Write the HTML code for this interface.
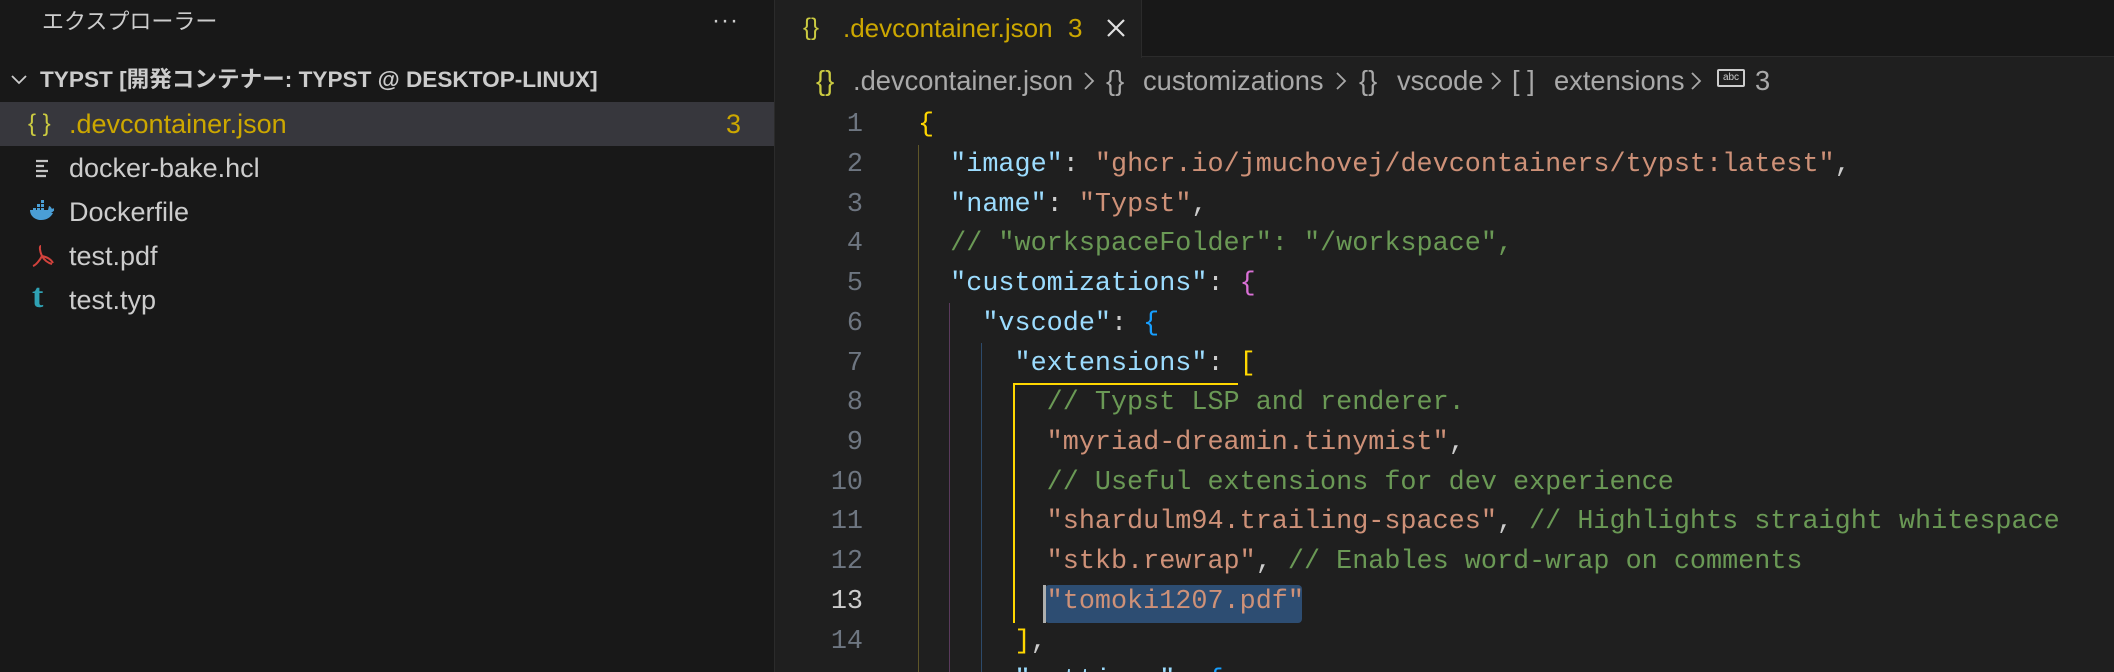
<!DOCTYPE html>
<html style="width:2114px;height:672px;overflow:hidden"><head><meta charset="utf-8"><style>
*{margin:0;padding:0;box-sizing:border-box}
body{width:2114px;height:672px;overflow:hidden;background:#1f1f1f;font-family:"Liberation Sans","Noto Sans CJK JP",sans-serif;position:relative}
.a{position:absolute;white-space:pre}
#side{position:absolute;left:0;top:0;width:775px;height:672px;background:#181818;border-right:1px solid #2b2b2b}
.row{position:absolute;left:0;width:774px;height:44px;line-height:44px;font-size:27px;color:#cccccc}
.row .t{position:absolute;left:69px}
.row .ic{position:absolute;left:28px;top:0;width:28px;height:44px}
#tabs{position:absolute;left:776px;top:0;width:1338px;height:57px;background:#181818;border-bottom:1px solid #2b2b2b}
#tab{position:absolute;left:776px;top:0;width:366px;height:58px;background:#1f1f1f;border-right:1px solid #2b2b2b}
.bc{position:absolute;top:62px;height:38px;line-height:38px;font-size:27.3px;color:#a9a9a9;white-space:pre}
.ch{position:absolute;top:70px}
.ln{position:absolute;left:780px;width:83px;text-align:right;font-family:"Liberation Mono",monospace;font-size:26.8px;color:#6e7681;height:40px;line-height:40px}
.cl{position:absolute;left:918px;font-family:"Liberation Mono",monospace;font-size:26.8px;color:#cccccc;height:40px;line-height:40px;white-space:pre}
.k{color:#9cdcfe}.s{color:#ce9178}.c{color:#6a9955}.g{color:#ffd700}.p{color:#da70d6}.b{color:#179fff}
.gd{position:absolute;width:1px}
</style></head><body>
<div id="side">
  <div class="a" style="left:42px;top:7px;font-size:22px;color:#cccccc;line-height:30px">エクスプローラー</div>
  <div class="a" style="left:712px;top:6px;font-size:24px;color:#cccccc;letter-spacing:1px;line-height:30px">···</div>
  <svg class="a" style="left:10px;top:72px" width="18" height="16" viewBox="0 0 18 16"><path d="M2 4 L9 11 L16 4" stroke="#cccccc" stroke-width="1.8" fill="none"/></svg>
  <div class="a" style="left:40px;top:65px;font-size:22.6px;font-weight:bold;color:#cccccc;line-height:30px">TYPST [開発コンテナー: TYPST @ DESKTOP-LINUX]</div>
  <div class="row" style="top:102px;background:#37373d"><span class="ic" style="color:#cbcb41;font-size:24px;left:28px">{ }</span><span class="t" style="color:#cca700">.devcontainer.json</span><span class="a" style="left:726px;color:#cca700">3</span></div>
  <div class="row" style="top:146px"><svg class="ic" viewBox="0 0 28 44"><g stroke="#c5c5c5" stroke-width="2.2"><path d="M8 15h12M8 20h8M8 25h12M8 30h10"/></g></svg><span class="t">docker-bake.hcl</span></div>
  <div class="row" style="top:190px"><svg class="ic" viewBox="0 0 28 44" style="left:26px"><path d="M4 23h21c2-1 3-3 5-3-1-2-3-2-4-1-1-2-2-3-3-3l-1 4H4c0 6 5 10 11 10 6 0 10-3 12-7z" fill="#4a9ed6"/><g fill="#4a9ed6"><rect x="7" y="18" width="3" height="3"/><rect x="11" y="18" width="3" height="3"/><rect x="15" y="18" width="3" height="3"/><rect x="11" y="14" width="3" height="3"/><rect x="15" y="14" width="3" height="3"/><rect x="15" y="10" width="3" height="3"/></g></svg><span class="t">Dockerfile</span></div>
  <div class="row" style="top:234px"><svg class="ic" viewBox="0 0 28 44"><path d="M13 12c-2 0-1 6 1 10 2 4 6 7 10 8M14 22c-2 4-6 9-9 10M14 22c4 1 8 2 11 7" stroke="#d2423c" stroke-width="2" fill="none"/></svg><span class="t">test.pdf</span></div>
  <div class="row" style="top:278px"><span class="ic" style="color:#2fa1b3;font-size:34px;font-weight:bold;font-family:'Liberation Serif',serif;left:32px;top:-3px">t</span><span class="t">test.typ</span></div>
</div>
<div id="tabs"></div>
<div id="tab">
  <span class="a" style="left:27px;top:12px;font-size:24px;color:#cbcb41;line-height:32px">{}</span>
  <span class="a" style="left:67px;top:12px;font-size:26px;color:#cca700;line-height:32px">.devcontainer.json</span>
  <span class="a" style="left:292px;top:12px;font-size:26px;color:#cca700;line-height:32px">3</span>
  <svg class="a" style="left:329px;top:17px" width="22" height="22" viewBox="0 0 22 22"><path d="M3 3L19 19M19 3L3 19" stroke="#e0e0e0" stroke-width="2.2"/></svg>
</div>
<div class="bc" style="left:816px;color:#cbcb41">{}</div>
<div class="bc" style="left:853px">.devcontainer.json</div>
<svg class="ch" style="left:1082px" width="14" height="22" viewBox="0 0 14 22"><path d="M3 3l8 8-8 8" stroke="#a9a9a9" stroke-width="1.8" fill="none"/></svg>
<div class="bc" style="left:1106px">{}</div>
<div class="bc" style="left:1143px">customizations</div>
<svg class="ch" style="left:1334px" width="14" height="22" viewBox="0 0 14 22"><path d="M3 3l8 8-8 8" stroke="#a9a9a9" stroke-width="1.8" fill="none"/></svg>
<div class="bc" style="left:1359px">{}</div>
<div class="bc" style="left:1397px">vscode</div>
<svg class="ch" style="left:1489px" width="14" height="22" viewBox="0 0 14 22"><path d="M3 3l8 8-8 8" stroke="#a9a9a9" stroke-width="1.8" fill="none"/></svg>
<div class="bc" style="left:1512px">[ ]</div>
<div class="bc" style="left:1554px">extensions</div>
<svg class="ch" style="left:1689px" width="14" height="22" viewBox="0 0 14 22"><path d="M3 3l8 8-8 8" stroke="#a9a9a9" stroke-width="1.8" fill="none"/></svg>
<div class="a" style="left:1717px;top:69px;width:28px;height:18px;border:2px solid #cccccc;border-radius:2px;font-size:10px;color:#cccccc;text-align:center;line-height:14px">abc</div>
<div class="bc" style="left:1755px">3</div>

<div class="gd" style="left:918px;top:145px;height:527px;background:#5f5628"></div>
<div class="gd" style="left:949px;top:303px;height:369px;background:#5a3a5c"></div>
<div class="gd" style="left:981px;top:343px;height:329px;background:#2d4a6a"></div>
<div class="a" style="left:1013px;top:383px;width:225px;height:2px;background:#ffd700"></div>
<div class="a" style="left:1013px;top:383px;width:2px;height:240px;background:#ffd700"></div>
<div class="a" style="left:1045px;top:585px;width:257px;height:38px;background:#2d4d72;border-radius:4px"></div>
<div class="a" style="left:1043px;top:585px;width:3px;height:38px;background:#aeafad"></div>

<div class="ln" style="top:105px">1</div>
<div class="ln" style="top:145px">2</div>
<div class="ln" style="top:185px">3</div>
<div class="ln" style="top:224px">4</div>
<div class="ln" style="top:264px">5</div>
<div class="ln" style="top:304px">6</div>
<div class="ln" style="top:344px">7</div>
<div class="ln" style="top:383px">8</div>
<div class="ln" style="top:423px">9</div>
<div class="ln" style="top:463px">10</div>
<div class="ln" style="top:502px">11</div>
<div class="ln" style="top:542px">12</div>
<div class="ln" style="top:582px;color:#cccccc">13</div>
<div class="ln" style="top:622px">14</div>

<div class="cl" style="top:105px"><span class="g">{</span></div>
<div class="cl" style="top:145px">  <span class="k">"image"</span>: <span class="s">"ghcr.io/jmuchovej/devcontainers/typst:latest"</span>,</div>
<div class="cl" style="top:185px">  <span class="k">"name"</span>: <span class="s">"Typst"</span>,</div>
<div class="cl" style="top:224px">  <span class="c">// "workspaceFolder": "/workspace",</span></div>
<div class="cl" style="top:264px">  <span class="k">"customizations"</span>: <span class="p">{</span></div>
<div class="cl" style="top:304px">    <span class="k">"vscode"</span>: <span class="b">{</span></div>
<div class="cl" style="top:344px">      <span class="k">"extensions"</span>: <span class="g">[</span></div>
<div class="cl" style="top:383px">        <span class="c">// Typst LSP and renderer.</span></div>
<div class="cl" style="top:423px">        <span class="s">"myriad-dreamin.tinymist"</span>,</div>
<div class="cl" style="top:463px">        <span class="c">// Useful extensions for dev experience</span></div>
<div class="cl" style="top:502px">        <span class="s">"shardulm94.trailing-spaces"</span>, <span class="c">// Highlights straight whitespace</span></div>
<div class="cl" style="top:542px">        <span class="s">"stkb.rewrap"</span>, <span class="c">// Enables word-wrap on comments</span></div>
<div class="cl" style="top:582px">        <span class="s">"tomoki1207.pdf"</span></div>
<div class="cl" style="top:622px">      <span class="g">]</span>,</div>
<div class="a" style="left:0;top:661px;width:2114px;height:11px;overflow:hidden"><div class="cl" style="top:0;left:918px">      <span class="k">"settings"</span>: <span class="b">{</span></div></div>
</body></html>
